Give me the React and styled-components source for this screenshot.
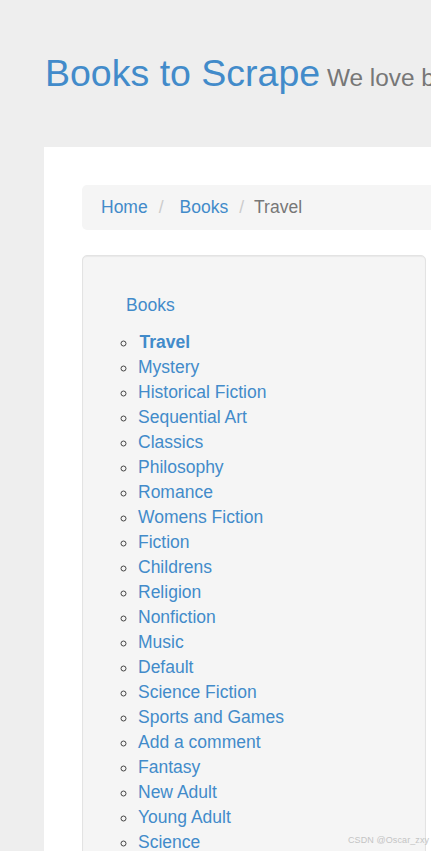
import React from 'react'
import styled, { createGlobalStyle } from 'styled-components'

const GlobalStyle = createGlobalStyle`
html, body {
  margin: 0;
  padding: 0;
  overflow: hidden;
  background-color: #eeeeee;
  font-family: "Liberation Sans", Arial, sans-serif;
  font-size: 17.5px;
  line-height: 25px;
  color: #333333;
}
a {
  color: #428bca;
  text-decoration: none;
}
`

const Page = styled.div`
width: 1200px;
min-height: 851px;
position: relative;
`

const Header = styled.header`
box-sizing: border-box;
height: 147px;
padding: 53px 0 0 45px;
white-space: nowrap;
`

const Title = styled.a`
font-size: 37.5px;
line-height: 41px;
color: #428bca;
`

const Tagline = styled.small`
font-size: 24.4px;
color: #777777;
`

const PageInner = styled.div`
margin-left: 44px;
width: 1100px;
min-height: 760px;
background-color: #ffffff;
padding: 38px 38px 0 38px;
box-sizing: border-box;
`

const Breadcrumb = styled.ul`
display: flex;
align-items: center;
list-style: none;
margin: 0 0 25px 0;
padding: 10px 19px;
height: 45px;
box-sizing: border-box;
background-color: #f5f5f5;
border-radius: 5px;
`

const Crumb = styled.li`
color: ${p => (p.$active ? '#777777' : '#428bca')};
`

const Separator = styled.li`
color: #cccccc;
padding: 0 ${p => p.$after}px 0 11px;
`

const Row = styled.div`
display: flex;
`

const Sidebar = styled.aside`
width: 344px;
min-height: 620px;
box-sizing: border-box;
padding: 24px;
background-color: #f5f5f5;
border: 1px solid #e3e3e3;
border-radius: 5px;
box-shadow: inset 0 1px 1px rgba(0, 0, 0, 0.05);
`

const NavList = styled.ul`
list-style: none;
margin: 0;
padding: 0;
`

const NavHeading = styled.a`
display: block;
padding: 12.5px 19px;
`

const SubList = styled.ul`
list-style: circle;
margin: 0;
padding-left: 31px;
`

const SubItem = styled.li`
color: #333333;
&::marker {
  color: #444444;
}
`

const SubLink = styled.a`
font-weight: ${p => (p.$active ? 'bold' : 'normal')};
margin-left: ${p => (p.$active ? 1.5 : 0)}px;
`

const Watermark = styled.div`
position: absolute;
left: 348px;
top: 833px;
font-family: "Liberation Sans", Arial, sans-serif;
font-size: 9px;
line-height: 14px;
color: #c4c4c4;
letter-spacing: 0.1px;
`

const categories = [
  'Mystery',
  'Historical Fiction',
  'Sequential Art',
  'Classics',
  'Philosophy',
  'Romance',
  'Womens Fiction',
  'Fiction',
  'Childrens',
  'Religion',
  'Nonfiction',
  'Music',
  'Default',
  'Science Fiction',
  'Sports and Games',
  'Add a comment',
  'Fantasy',
  'New Adult',
  'Young Adult',
  'Science',
  'Poetry',
  'Paranormal',
]

export default function App() {
  return (
    <>
      <GlobalStyle />
      <Page>
        <Header>
          <Title href="#">Books to Scrape</Title>
          <Tagline> We love being scraped!</Tagline>
        </Header>

        <PageInner>
          <Breadcrumb>
            <Crumb><a href="#">Home</a></Crumb>
            <Separator $after={16}>/</Separator>
            <Crumb><a href="#">Books</a></Crumb>
            <Separator $after={10}>/</Separator>
            <Crumb $active>Travel</Crumb>
          </Breadcrumb>

          <Row>
            <Sidebar>
              <NavList>
                <li>
                  <NavHeading href="#">Books</NavHeading>
                  <SubList>
                    <SubItem>
                      <SubLink href="#" $active>Travel</SubLink>
                    </SubItem>
                    {categories.map(name => (
                      <SubItem key={name}>
                        <SubLink href="#">{name}</SubLink>
                      </SubItem>
                    ))}
                  </SubList>
                </li>
              </NavList>
            </Sidebar>
          </Row>
        </PageInner>

        <Watermark>CSDN @Oscar_zxy</Watermark>
      </Page>
    </>
  )
}
